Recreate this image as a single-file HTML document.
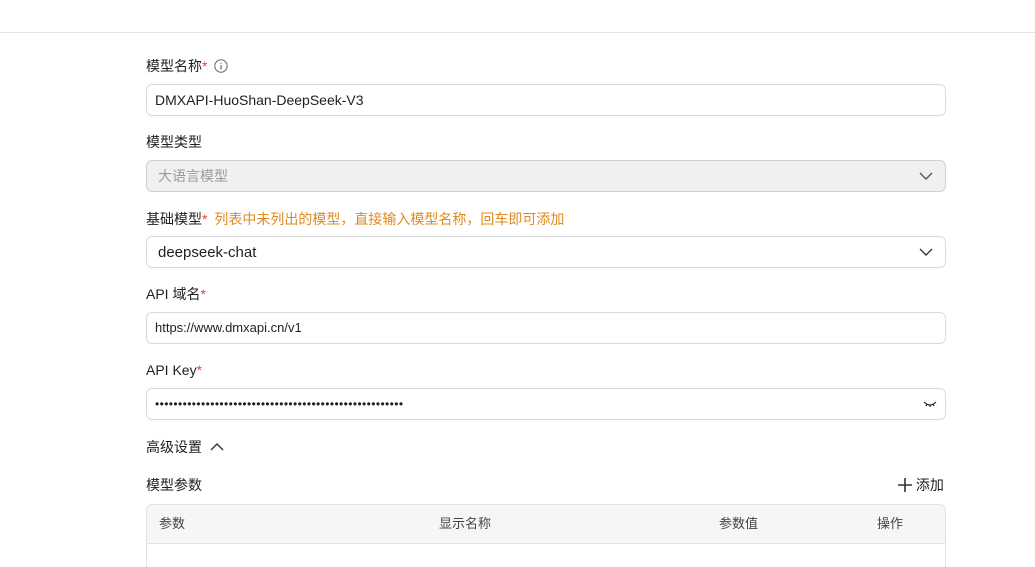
<!DOCTYPE html><html><head><meta charset="utf-8"><style>
html,body{margin:0;width:1035px;height:567px;overflow:hidden}
body{background:#fff;font-family:"Liberation Sans","Noto Sans CJK SC",sans-serif;color:#1f1f1f;position:relative}
.a{position:absolute}
.lbl{position:absolute;left:146px;font-size:14px;line-height:18px}
.st{color:#e0453a}
.in{position:absolute;left:146px;width:798px;height:30px;border:1px solid #d9d9dc;border-radius:6px;font-size:14px;line-height:30px;box-sizing:content-box}
.chev{position:absolute;right:12px;top:10px}
</style></head><body>
<div class="a" style="left:0;top:32px;width:1035px;height:1px;background:#e3e3e3"></div>
<div class="lbl" style="top:57px">模型名称<span class="st">*</span> <svg width="14" height="14" viewBox="0 0 14 14" style="vertical-align:-2px;margin-left:3px"><circle cx="7" cy="7" r="6.2" fill="none" stroke="#666" stroke-width="1"/><path d="M7 6v4.5M7 3.8v1" stroke="#666" stroke-width="1.2"/></svg></div>
<div class="in" style="top:84px"><span style="padding-left:8px">DMXAPI-HuoShan-DeepSeek-V3</span></div>
<div class="lbl" style="top:133px">模型类型</div>
<div class="in" style="top:160px;background:#eff0f2;border-color:#d0d0d3;color:#9a9a9a"><span style="padding-left:11px">大语言模型</span><svg class="chev" width="14" height="10" viewBox="0 0 14 10"><path d="M1 2l6 6 6-6" fill="none" stroke="#555" stroke-width="1.4"/></svg></div>
<div class="lbl" style="top:210px">基础模型<span class="st">*</span> <span style="color:#e08a1e;font-size:14px;margin-left:3px">列表中未列出的模型，直接输入模型名称，回车即可添加</span></div>
<div class="in" style="top:236px;font-size:15px;line-height:31px"><span style="padding-left:11px">deepseek-chat</span><svg class="chev" width="14" height="10" viewBox="0 0 14 10"><path d="M1 2l6 6 6-6" fill="none" stroke="#333" stroke-width="1.4"/></svg></div>
<div class="lbl" style="top:285px">API 域名<span class="st">*</span></div>
<div class="in" style="top:312px;font-size:13px"><span style="padding-left:8px">https://www.dmxapi.cn/v1</span></div>
<div class="lbl" style="top:361px">API Key<span class="st">*</span></div>
<div class="in" style="top:388px;font-size:12px;letter-spacing:0.4px"><span style="padding-left:8px">••••••••••••••••••••••••••••••••••••••••••••••••••••••</span><svg class="a" style="right:8px;top:11px" width="14" height="8" viewBox="0 0 14 8"><path d="M1 2q6 6 12 0M4 4l-1 2M10 4l1 2M7 5v2" fill="none" stroke="#222" stroke-width="1.2"/></svg></div>
<div class="lbl" style="top:438px">高级设置 <svg width="14" height="10" viewBox="0 0 14 10" style="margin-left:4px"><path d="M1 8l6-6 6 6" fill="none" stroke="#333" stroke-width="1.4"/></svg></div>
<div class="lbl" style="top:476px">模型参数</div>
<div class="a" style="left:898px;top:476px;font-size:14px;line-height:18px"><svg width="14" height="14" viewBox="0 0 14 14" style="vertical-align:-2px"><path d="M7 0v14M0 7h14" stroke="#333" stroke-width="1.6"/></svg> 添加</div>
<div class="a" style="left:146px;top:504px;width:798px;height:70px;border:1px solid #e2e2e4;border-radius:6px"></div>
<div class="a" style="left:147px;top:505px;width:798px;height:38px;background:#f5f6f7;border-bottom:1px solid #e2e2e4;border-radius:6px 6px 0 0;font-size:13px;color:#444;line-height:38px">
<span class="a" style="left:12px">参数</span><span class="a" style="left:292px">显示名称</span><span class="a" style="left:572px">参数值</span><span class="a" style="left:730px">操作</span></div>
</body></html>
